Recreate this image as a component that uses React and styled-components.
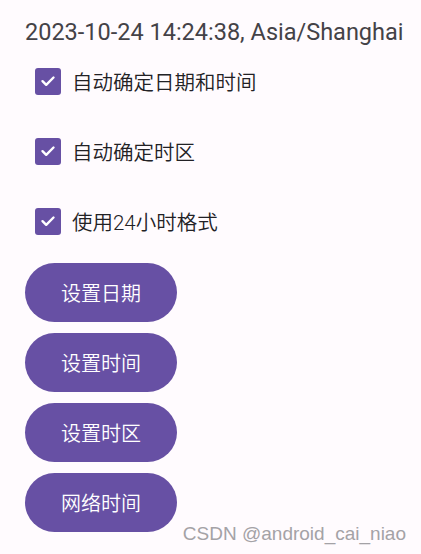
import React from "react";
import styled, { createGlobalStyle } from "styled-components";

const Global = createGlobalStyle`
  html, body { margin: 0; padding: 0; background: #FFFBFE; }
  body { width: 421px; height: 554px; overflow: hidden; }
`;

const Page = styled.div`
  position: relative;
  width: 421px;
  height: 554px;
  box-sizing: border-box;
  padding: 18px 0 0 25px;
  background: #FFFBFE;
  font-family: Roboto, "Noto Sans CJK SC", sans-serif;
`;

const Title = styled.div`
  height: 28px;
  line-height: 28px;
  font-size: 23.5px;
  color: #444247;
  white-space: nowrap;
`;

const Options = styled.div`
  display: flex;
  flex-direction: column;
`;

const Row = styled.label`
  display: flex;
  align-items: center;
  gap: 11px;
  height: 70px;
  padding-left: 10px;
  font-size: 20.5px;
  font-weight: 350;
  color: #222125;
`;

const Box = styled.span`
  width: 26px;
  height: 27px;
  border-radius: 3px;
  background: #6750A4;
  display: flex;
  align-items: center;
  justify-content: center;
  flex-shrink: 0;
`;

const Buttons = styled.div`
  display: flex;
  flex-direction: column;
  gap: 11px;
  margin-top: 7px;
`;

const Button = styled.button`
  width: 152px;
  height: 59px;
  border: none;
  border-radius: 30px;
  background: #6750A4;
  color: #ffffff;
  font-family: Roboto, "Noto Sans CJK SC", sans-serif;
  font-size: 20px;
  font-weight: 350;
  padding: 0;
`;

const Watermark = styled.div`
  position: absolute;
  right: 15px;
  bottom: 9px;
  font-family: "Liberation Sans", Arial, sans-serif;
  font-size: 19px;
  color: #a4a2a6;
  white-space: nowrap;
`;

const Check = () => (
  <svg width="18" height="18" viewBox="0 0 18 18">
    <path d="M3.5 9.2 L7.2 12.8 L14.5 5.5" fill="none" stroke="#fff" strokeWidth="2.4" strokeLinecap="round" strokeLinejoin="round" />
  </svg>
);

const options = ["自动确定日期和时间", "自动确定时区", "使用24小时格式"];
const buttons = ["设置日期", "设置时间", "设置时区", "网络时间"];

export default function App() {
  return (
    <>
      <Global />
      <Page>
        <Title>2023-10-24 14:24:38, Asia/Shanghai</Title>
        <Options>
          {options.map((o) => (
            <Row key={o}>
              <Box><Check /></Box>
              <span>{o}</span>
            </Row>
          ))}
        </Options>
        <Buttons>
          {buttons.map((b) => (
            <Button key={b}>{b}</Button>
          ))}
        </Buttons>
        <Watermark>CSDN @android_cai_niao</Watermark>
      </Page>
    </>
  );
}
